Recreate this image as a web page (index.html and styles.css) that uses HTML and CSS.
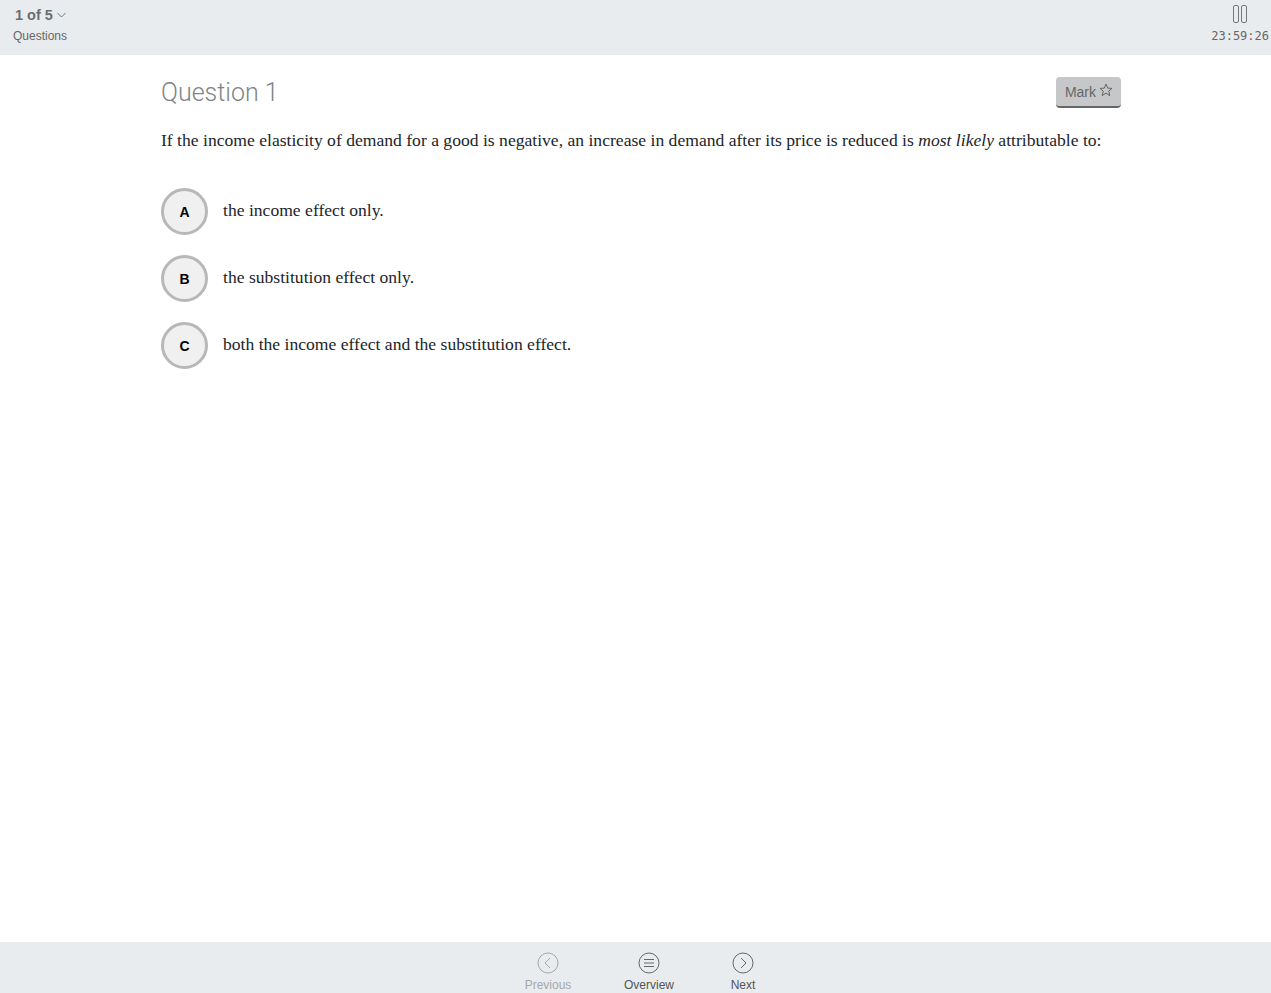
FILE: index.html
```html
<!DOCTYPE html>
<html lang="en">
  <head>
    <meta charset="UTF-8" />
    <meta name="viewport" content="width=device-width, initial-scale=1.0" />
    <link rel="stylesheet" href="styles.css">
    <title>Question 1</title>
  </head>
  <body>
    <!-- top bar -->
    <header class="top-bar">
      <div class="progress">
        <div class="progress-count">
          1 of 5
          <svg class="chevron" width="9" height="6" viewBox="0 0 9 6"><path d="M0.5 1 L4.5 5 L8.5 1" /></svg>
        </div>
        <div class="progress-label">Questions</div>
      </div>
      <div class="timer">
        <svg class="pause" width="16" height="20" viewBox="0 0 16 20">
          <rect x="1.5" y="1.5" width="5" height="17" rx="1.5" />
          <rect x="9.5" y="1.5" width="5" height="17" rx="1.5" />
        </svg>
        <div class="timer-value">23:59:26</div>
      </div>
    </header>

    <main class="question">
      <div class="question-head">
        <h1 class="question-title">Question 1</h1>
        <button class="btn-mark">
          Mark
          <svg width="14" height="14" viewBox="0 0 14 14"><path d="M7 1 L8.7 5.1 L13 5.4 L9.7 8.2 L10.8 12.6 L7 10.2 L3.2 12.6 L4.3 8.2 L1 5.4 L5.3 5.1 Z" /></svg>
        </button>
      </div>
      <p class="question-text">If the income elasticity of demand for a good is negative, an increase in demand after its price is reduced is <em>most likely</em> attributable to:</p>
      <div class="answers">
        <div class="answer">
          <div class="answer-key">A</div>
          <div class="answer-text">the income effect only.</div>
        </div>
        <div class="answer">
          <div class="answer-key">B</div>
          <div class="answer-text">the substitution effect only.</div>
        </div>
        <div class="answer">
          <div class="answer-key">C</div>
          <div class="answer-text">both the income effect and the substitution effect.</div>
        </div>
      </div>
    </main>

    <!-- bottom nav -->
    <footer class="bottom-bar">
      <div class="nav-item nav-previous">
        <svg width="22" height="22" viewBox="0 0 22 22"><circle cx="11" cy="11" r="10" /><path d="M13 6 L8 11 L13 16" /></svg>
        <span>Previous</span>
      </div>
      <div class="nav-item nav-overview">
        <svg width="22" height="22" viewBox="0 0 22 22"><circle cx="11" cy="11" r="10" /><path d="M6 7.5 H16 M6 11 H16 M6 14.5 H16" /></svg>
        <span>Overview</span>
      </div>
      <div class="nav-item nav-next">
        <svg width="22" height="22" viewBox="0 0 22 22"><circle cx="11" cy="11" r="10" /><path d="M9 6 L14 11 L9 16" /></svg>
        <span>Next</span>
      </div>
    </footer>
  </body>
</html>
```

FILE: styles.css
```css
html,
body {
  height: 100%;
}

body {
  margin: 0;
  display: flex;
  flex-direction: column;
  min-height: 993px;
  background-color: #fff;
  font-family: "Liberation Sans", Arial, sans-serif;
  color: #666;
}

.top-bar {
  height: 55px;
  flex-shrink: 0;
  display: flex;
  justify-content: space-between;
  background-color: #e9ecef;
  padding: 0 2px 0 13px;
}

.progress-count {
  margin: 7px 0 0 2px;
  font-size: 14.5px;
  line-height: 16px;
  font-weight: bold;
  color: #6b6e70;
}

.chevron {
  vertical-align: 2px;
}

.chevron path {
  fill: none;
  stroke: #777;
  stroke-width: 1;
}

.progress-label {
  margin-top: 6px;
  font-size: 12px;
  line-height: 14px;
  color: #666;
}

.timer {
  display: flex;
  flex-direction: column;
  align-items: center;
}

.pause {
  margin-top: 4px;
}

.pause rect {
  fill: none;
  stroke: #777;
  stroke-width: 1;
}

.timer-value {
  margin-top: 4px;
  font-family: "DejaVu Sans Mono", monospace;
  font-size: 12px;
  line-height: 16px;
  color: #666;
}

.question {
  flex: 1;
  padding: 22px 150px 0 161px;
}

.question-head {
  display: flex;
  justify-content: space-between;
  align-items: center;
}

.question-title {
  margin: 0;
  font-family: Roboto, "Liberation Sans", sans-serif;
  font-size: 25px;
  line-height: 29px;
  font-weight: 300;
  color: #808487;
}

.btn-mark {
  display: flex;
  align-items: center;
  gap: 3px;
  height: 31px;
  padding: 0 8px 0 9px;
  border: none;
  border-bottom: 2px solid #666;
  border-radius: 4px;
  background-color: #c6c7c9;
  font-family: inherit;
  font-size: 14px;
  color: #666;
}

.btn-mark svg {
  margin-top: -3px;
}

.btn-mark path {
  fill: none;
  stroke: #666;
  stroke-width: 1;
}

.question-text {
  margin: 20px 0 0;
  font-family: "Liberation Serif", Georgia, serif;
  font-size: 17.6px;
  line-height: 24px;
  color: #212529;
}

.answers {
  margin-top: 36px;
  display: flex;
  flex-direction: column;
  gap: 20px;
}

.answer {
  display: flex;
  align-items: center;
  gap: 15px;
}

.answer-key {
  width: 47px;
  height: 47px;
  box-sizing: border-box;
  display: flex;
  justify-content: center;
  align-items: center;
  border: 3px solid #b8b8b8;
  border-radius: 50%;
  background-color: #f0f0f0;
  font-size: 14px;
  font-weight: bold;
  color: #000;
}

.answer-text {
  margin-top: -4px;
  font-family: "Liberation Serif", Georgia, serif;
  font-size: 17.6px;
  line-height: 24px;
  color: #212529;
}

.bottom-bar {
  height: 51px;
  flex-shrink: 0;
  display: flex;
  justify-content: center;
  padding-left: 10px;
  background-color: #e9ecef;
}

.nav-item {
  display: flex;
  flex-direction: column;
  align-items: center;
  padding-top: 10px;
  font-size: 12px;
  line-height: 14px;
  color: #555;
}

.nav-item svg {
  margin-bottom: 4px;
}

.nav-item circle,
.nav-item path {
  fill: none;
  stroke: #666;
  stroke-width: 1;
}

.nav-previous {
  width: 46px;
  margin-right: 53px;
  color: #a5a8aa;
}

.nav-previous circle,
.nav-previous path {
  stroke: #a5a8aa;
}

.nav-overview {
  width: 50px;
  margin-right: 56px;
}

.nav-next {
  width: 26px;
}
```
